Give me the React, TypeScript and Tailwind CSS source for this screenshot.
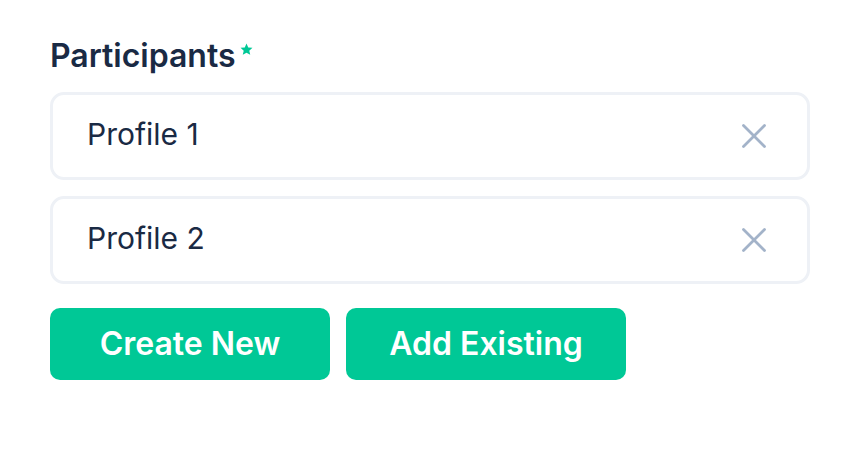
function XIcon() {
  return (
    <svg width="24" height="24" viewBox="0 0 24 24" fill="none" stroke="#a3b3c9" strokeWidth="2.8" strokeLinecap="round">
      <path d="M1.5 1.5L22.5 22.5" />
      <path d="M22.5 1.5L1.5 22.5" />
    </svg>
  );
}

function Star() {
  return (
    <svg width="13" height="13" viewBox="0 0 24 24" fill="#00c896">
      <path d="M12 1l3.2 7.2 7.8.7-5.9 5.2 1.8 7.7L12 17.8l-6.9 4 1.8-7.7L1 8.9l7.8-.7z" />
    </svg>
  );
}

function Participant({ name }: { name: string }) {
  return (
    <div className="h-[88px] rounded-[14px] border-[3px] border-[#eef1f6] bg-white flex items-center justify-between pl-[34px] pr-[41px]">
      <span className="text-[30px] text-[#1a2a44] pb-[4px]">{name}</span>
      <button className="flex items-center justify-center">
        <XIcon />
      </button>
    </div>
  );
}

export default function App() {
  return (
    <div className="min-h-screen bg-white font-['Inter','Liberation_Sans',sans-serif] pt-[36px] px-[50px] w-[860px]">
      <div className="w-[760px]">
        <div className="flex items-start mb-[16px]">
          <h2 className="text-[32px] leading-[40px] font-semibold text-[#1a2a44]">Participants</h2>
          <span className="ml-[4px] mt-[7px]"><Star /></span>
        </div>
        <div className="flex flex-col gap-[16px]">
          <Participant name="Profile 1" />
          <Participant name="Profile 2" />
        </div>
        <div className="flex gap-[16px] mt-[24px]">
          <button className="w-[280px] h-[72px] rounded-[10px] bg-[#00c896] text-white text-[32px] font-semibold">
            Create New
          </button>
          <button className="w-[280px] h-[72px] rounded-[10px] bg-[#00c896] text-white text-[32px] font-semibold">
            Add Existing
          </button>
        </div>
      </div>
    </div>
  );
}
